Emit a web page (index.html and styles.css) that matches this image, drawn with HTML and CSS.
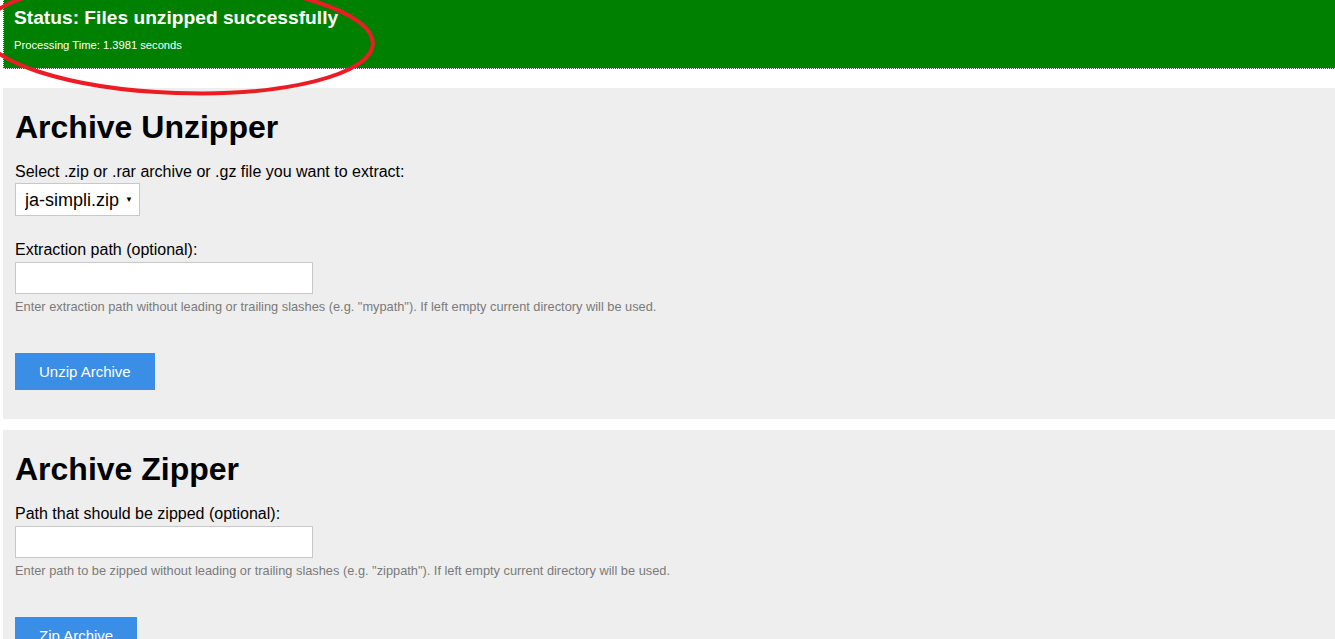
FILE: index.html
```html
<!DOCTYPE html>
<html lang="en">
<head>
<meta charset="utf-8">
<title>Archive Unzipper</title>
<link rel="stylesheet" href="styles.css">
</head>
<body>
<div class="page">
  <div class="status">
    <h3 class="status-title">Status: Files unzipped successfully</h3>
    <p class="status-time">Processing Time: 1.3981 seconds</p>
  </div>
  <svg class="annotation" width="420" height="110" viewBox="0 0 420 110" aria-hidden="true">
    <ellipse cx="178" cy="37" rx="195" ry="56" transform="rotate(2 178 37)" fill="none" stroke="#ed1c24" stroke-width="4"/>
  </svg>

  <form class="panel">
    <h1 class="panel-title">Archive Unzipper</h1>
    <label class="field-label" for="zipfile">Select .zip or .rar archive or .gz file you want to extract:</label>
    <div class="select-wrap">
      <select id="zipfile" class="select">
        <option>ja-simpli.zip</option>
      </select>
      <span class="select-arrow">&#9660;</span>
    </div>
    <label class="field-label gap-top" for="extpath">Extraction path (optional):</label>
    <input id="extpath" class="text-input" type="text">
    <p class="help">Enter extraction path without leading or trailing slashes (e.g. "mypath"). If left empty current directory will be used.</p>
    <button type="button" class="btn">Unzip Archive</button>
  </form>

  <form class="panel">
    <h1 class="panel-title">Archive Zipper</h1>
    <label class="field-label" for="zippath">Path that should be zipped (optional):</label>
    <input id="zippath" class="text-input" type="text">
    <p class="help">Enter path to be zipped without leading or trailing slashes (e.g. "zippath"). If left empty current directory will be used.</p>
    <button type="button" class="btn">Zip Archive</button>
  </form>
</div>
</body>
</html>
```

FILE: styles.css
```css
html, body {
  margin: 0;
  padding: 0;
  background: #fff;
}

body {
  font-family: "Liberation Sans", Arial, sans-serif;
  color: #000;
}

.page {
  position: relative;
  padding-left: 3px;
}

.status {
  background: #008000;
  color: #fff;
  border-left: 1px dotted #e8e8e8;
  border-bottom: 1px dotted #e8e8e8;
  padding: 7px 10px 17px 10px;
  margin-bottom: 19px;
}

.status-title {
  margin: 0;
  font-size: 19.2px;
  font-weight: bold;
}

.status-time {
  margin: 10px 0 0 0;
  font-size: 11.2px;
}

.annotation {
  position: absolute;
  top: 0;
  left: 0;
  overflow: visible;
  pointer-events: none;
}

.panel {
  background: #eeeeee;
  padding: 21px 12px 29px 12px;
  margin: 0 0 11px 0;
  display: flex;
  flex-direction: column;
  align-items: flex-start;
}

.panel-title {
  margin: 0 0 17px 0;
  font-size: 32px;
  font-weight: bold;
}

.field-label {
  display: block;
  font-size: 16px;
  margin-bottom: 2px;
}

.gap-top {
  margin-top: 25px;
}

.select-wrap {
  position: relative;
}

.select {
  appearance: none;
  -webkit-appearance: none;
  box-sizing: border-box;
  font-family: "Liberation Sans", Arial, sans-serif;
  font-size: 18px;
  color: #000;
  background: #fff;
  border: 1px solid #c8c8c8;
  border-radius: 0;
  height: 33px;
  width: 125px;
  padding: 0 4px 0 9px;
  margin: 0;
}

.select-arrow {
  position: absolute;
  right: 7px;
  top: 13px;
  font-size: 8px;
  line-height: 8px;
  color: #000;
  pointer-events: none;
}

.text-input {
  box-sizing: border-box;
  width: 298px;
  height: 32px;
  background: #fff;
  border: 1px solid #c8c8c8;
  border-radius: 0;
  margin: 1px 0 0 0;
  padding: 0 6px;
  font-family: "Liberation Sans", Arial, sans-serif;
  font-size: 16px;
}

.help {
  margin: 5px 0 39px 0;
  font-size: 12.8px;
  color: #7a7a7a;
}

.btn {
  background: #3a8ee6;
  color: #fff;
  border: 0;
  border-radius: 0;
  padding: 10px 24px;
  font-family: "Liberation Sans", Arial, sans-serif;
  font-size: 15px;
  line-height: 17px;
  cursor: pointer;
}
```
